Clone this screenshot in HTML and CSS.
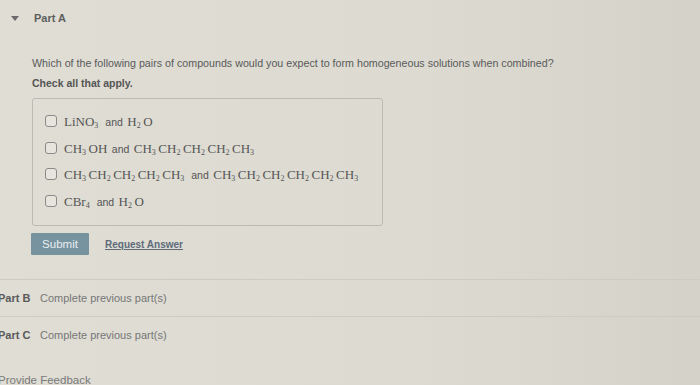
FILE: index.html
```html
<!DOCTYPE html>
<html lang="en">
<head>
    <meta charset="UTF-8">
    <title>Part A</title>
    <link rel="stylesheet" href="styles.css">
</head>
<body>
    <div class="page">
        <div class="part-header">
            <span class="arrow"></span>
            <span class="part-title">Part A</span>
        </div>

        <div class="part-body">
            <p class="question">Which of the following pairs of compounds would you expect to form homogeneous solutions when combined?</p>
            <p class="instruction">Check all that apply.</p>

            <div class="choices">
                <label class="choice">
                    <span class="box"></span>
                    <span class="text"><span class="f">LiNO<sub>3</sub></span> <span class="and">and</span> <span class="f">H<sub>2</sub>O</span></span>
                </label>
                <label class="choice">
                    <span class="box"></span>
                    <span class="text"><span class="f">CH<sub>3</sub>OH</span> <span class="and">and</span> <span class="f">CH<sub>3</sub>CH<sub>2</sub>CH<sub>2</sub>CH<sub>2</sub>CH<sub>3</sub></span></span>
                </label>
                <label class="choice">
                    <span class="box"></span>
                    <span class="text"><span class="f">CH<sub>3</sub>CH<sub>2</sub>CH<sub>2</sub>CH<sub>2</sub>CH<sub>3</sub></span> <span class="and">and</span> <span class="f">CH<sub>3</sub>CH<sub>2</sub>CH<sub>2</sub>CH<sub>2</sub>CH<sub>2</sub>CH<sub>3</sub></span></span>
                </label>
                <label class="choice">
                    <span class="box"></span>
                    <span class="text"><span class="f">CBr<sub>4</sub></span> <span class="and">and</span> <span class="f">H<sub>2</sub>O</span></span>
                </label>
            </div>

            <div class="actions">
                <button class="submit">Submit</button>
                <a class="request" href="#">Request Answer</a>
            </div>
        </div>

        <div class="part-row">
            <span class="part-label">Part B</span>
            <span class="part-status">Complete previous part(s)</span>
        </div>
        <div class="part-row">
            <span class="part-label">Part C</span>
            <span class="part-status">Complete previous part(s)</span>
        </div>

        <div class="feedback">Provide Feedback</div>
    </div>
</body>
</html>
```

FILE: styles.css
```css
body {
    margin: 0;
    padding: 0;
    font-family: "Liberation Sans", Arial, sans-serif;
    background: linear-gradient(to right, #dfddd4, #dcdad1 60%, #d5d2c9);
    color: #555;
    overflow: hidden;
}

.page {
    height: 385px;
}

.part-header {
    display: flex;
    align-items: center;
    height: 36px;
    padding-left: 11px;
}

.arrow {
    width: 0;
    height: 0;
    border-left: 4px solid transparent;
    border-right: 4px solid transparent;
    border-top: 5px solid #6a6a6a;
    margin-right: 15px;
}

.part-title {
    font-size: 11px;
    font-weight: bold;
    color: #5e5e5e;
}

.part-body {
    padding: 21px 0 0 32px;
}

.question {
    margin: 0;
    font-size: 10.7px;
    line-height: 13px;
    color: #5a5a5a;
}

.instruction {
    margin: 7px 0 0;
    font-size: 10.5px;
    line-height: 13px;
    font-weight: bold;
    color: #555;
}

.choices {
    width: 351px;
    height: 128px;
    margin-top: 8px;
    padding: 9px 0 0 12px;
    box-sizing: border-box;
    border: 1px solid #bcbab2;
    border-radius: 3px;
}

.choice {
    display: flex;
    align-items: center;
    height: 26.5px;
}

.text {
    white-space: nowrap;
}

.box {
    width: 10px;
    height: 10px;
    border: 1px solid #8a8a88;
    border-radius: 3px;
    margin-right: 7px;
    background: #e6e4dc;
}

.f {
    font-family: "Liberation Serif", "Times New Roman", serif;
    font-size: 13px;
    color: #555;
}

.f sub {
    font-size: 8px;
    line-height: 0;
    vertical-align: -2px;
    margin-right: 2.5px;
}

.and {
    font-size: 10.5px;
    color: #555;
}

.actions {
    display: flex;
    align-items: center;
    margin-top: 7px;
}

.submit {
    width: 58px;
    height: 22px;
    margin-left: -1px;
    padding: 0;
    border: none;
    border-radius: 1px;
    background-color: #7793a0;
    color: #e9eef0;
    font-family: "Liberation Sans", Arial, sans-serif;
    font-size: 11.5px;
}

.request {
    margin-left: 16px;
    font-size: 10px;
    font-weight: bold;
    color: #5d6b7a;
    text-decoration: underline;
}

.part-row {
    display: flex;
    align-items: center;
    height: 36px;
    margin-top: 24px;
    border-top: 1px solid #cdcbc2;
}

.part-row + .part-row {
    margin-top: 0;
}

.part-label {
    margin-left: -2px;
    width: 42px;
    font-size: 11px;
    font-weight: bold;
    color: #5a5a5a;
}

.part-status {
    font-size: 11px;
    color: #777;
}

.feedback {
    margin-top: 21px;
    margin-left: -2px;
    font-size: 11.5px;
    line-height: 13px;
    color: #7a7a7a;
}
```
